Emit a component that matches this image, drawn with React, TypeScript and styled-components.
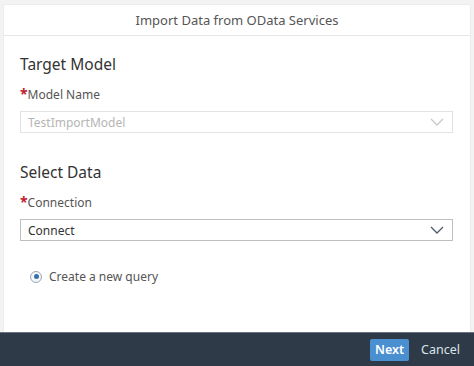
import { createGlobalStyle } from "styled-components";
import styled from "styled-components";

const GlobalStyle = createGlobalStyle`
    html, body {
        margin: 0;
        padding: 0;
        background: #f3f3f3;
    }
    body {
        font-family: "Noto Sans", "Open Sans", Arial, sans-serif;
        color: #333;
    }
`;

function Chevron({ color }: { color: string }) {
    return (
        <svg width="14" height="8" viewBox="0 0 14 8">
            <path d="M1 1 L7 7 L13 1" fill="none" stroke={color} strokeWidth="1.3" />
        </svg>
    );
}

export default function App() {
    return (
        <>
            <GlobalStyle />
            <Page>
                <Dialog>
                    <Header>Import Data from OData Services</Header>
                    <Body>
                        <SectionTitle>Target Model</SectionTitle>
                        <Label><Req>*</Req>Model Name</Label>
                        <Select disabled>
                            <span>TestImportModel</span>
                            <Chevron color="#c8c8c8" />
                        </Select>

                        <SectionTitle $gap>Select Data</SectionTitle>
                        <Label><Req>*</Req>Connection</Label>
                        <Select>
                            <span>Connect</span>
                            <Chevron color="#4b5a6b" />
                        </Select>

                        <RadioRow>
                            <Radio />
                            <span>Create a new query</span>
                        </RadioRow>
                    </Body>
                </Dialog>
                <Footer>
                    <PrimaryButton>Next</PrimaryButton>
                    <TextButton>Cancel</TextButton>
                </Footer>
            </Page>
        </>
    );
}

const Page = styled.div`
    width: 474px;
    height: 366px;
    display: flex;
    flex-direction: column;
    padding: 4px 3px 0 3px;
    box-sizing: border-box;
    overflow: hidden;
`;

const Dialog = styled.div`
    flex: 1;
    background: white;
    border: 1px solid #ececec;
    border-bottom: none;
    display: flex;
    flex-direction: column;
`;

const Header = styled.div`
    height: 30px;
    display: flex;
    align-items: center;
    justify-content: center;
    font-size: 13px;
    color: #555;
    border-bottom: 1px solid #e6e6e6;
`;

const Body = styled.div`
    padding: 18px 17px 0 16px;
    display: flex;
    flex-direction: column;
`;

const SectionTitle = styled.div<{ $gap?: boolean }>`
    font-size: 15.5px;
    color: #333;
    line-height: 20px;
    margin-top: ${(p) => (p.$gap ? "29px" : "0")};
`;

const Label = styled.div`
    font-size: 12px;
    color: #555;
    line-height: 16px;
    margin-top: 12px;
`;

const Req = styled.span`
    color: #c0202d;
    font-weight: bold;
    font-size: 14px;
`;

const Select = styled.div<{ disabled?: boolean }>`
    margin-top: 8px;
    height: 20px;
    border: 1px solid ${(p) => (p.disabled ? "#e2e2e2" : "#bfbfbf")};
    display: flex;
    align-items: center;
    justify-content: space-between;
    padding: 0 8px 0 7px;
    font-size: 12px;
    color: ${(p) => (p.disabled ? "#b5b5b5" : "#333")};
`;

const RadioRow = styled.div`
    margin-top: 27px;
    margin-left: 10px;
    display: flex;
    align-items: center;
    gap: 7px;
    font-size: 12px;
    color: #555;
`;

const Radio = styled.span`
    width: 12px;
    height: 12px;
    border-radius: 50%;
    border: 1px solid #9aa5b1;
    box-sizing: border-box;
    display: flex;
    align-items: center;
    justify-content: center;
    background: #f4f7fa;

    &::after {
        content: "";
        width: 5px;
        height: 5px;
        border-radius: 50%;
        background: #3b6fa8;
    }
`;

const Footer = styled.div`
    height: 33px;
    margin: 0 -3px;
    background: #2e3a47;
    border-top: 1px solid #6a7480;
    display: flex;
    align-items: center;
    justify-content: flex-end;
    gap: 12px;
    padding-right: 14px;
`;

const PrimaryButton = styled.button`
    height: 22px;
    width: 39px;
    padding: 0;
    border: none;
    border-radius: 2px;
    background: #4a90d0;
    color: white;
    font-family: "Noto Sans", Arial, sans-serif;
    font-size: 12.5px;
    font-weight: 600;
`;

const TextButton = styled.button`
    background: none;
    border: none;
    padding: 0;
    color: #dde3ea;
    font-family: "Noto Sans", Arial, sans-serif;
    font-size: 12.5px;
`;
